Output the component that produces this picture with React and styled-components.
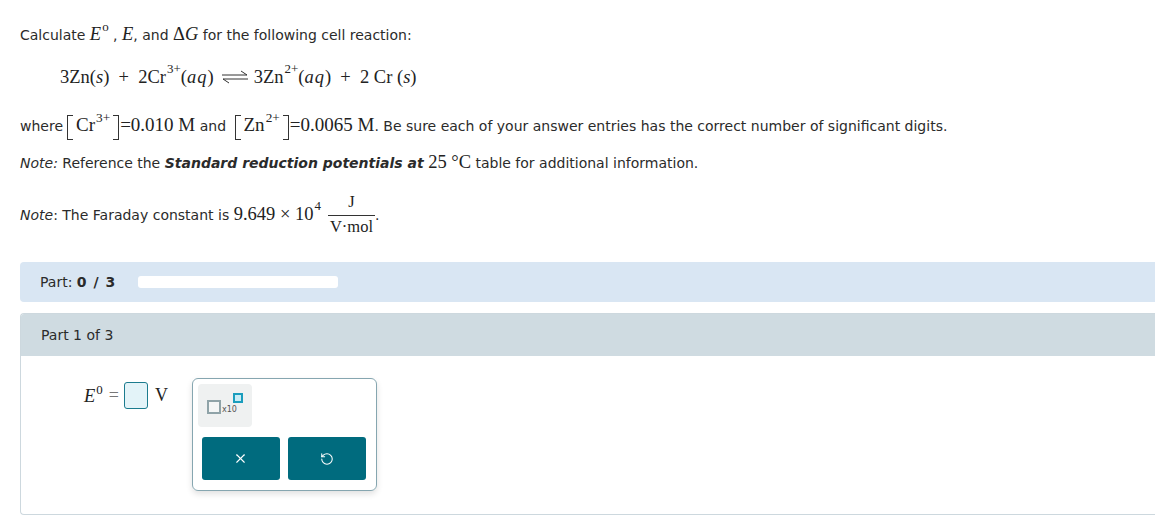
import React from "react";
import styled, { createGlobalStyle } from "styled-components";
import { X, RotateCcw } from "lucide-react";

const Global = createGlobalStyle`
  html, body { margin: 0; padding: 0; background: #fff; overflow: hidden; }
  body { font-family: "DejaVu Sans", Verdana, sans-serif; color: #2b2b2b; }
`;

const Page = styled.div`
  padding: 24px 0 0 20px;
  width: 1160px;
`;

const Para = styled.div`
  font-size: 14px;
  line-height: 20px;
  height: 20px;
  margin-top: ${(p) => p.$mt || 0}px;
  padding-left: ${(p) => p.$indent || 0}px;
  white-space: pre;
`;

const Math = styled.span`
  font-family: "Liberation Serif", "Times New Roman", serif;
  font-size: ${(p) => p.$size || 18.5}px;
  font-style: ${(p) => (p.$italic ? "italic" : "normal")};
  line-height: 20px;
  color: #222;
`;

const Sup = styled.sup`
  font-size: 0.7em;
  vertical-align: baseline;
  position: relative;
  top: ${(p) => -(p.$raise || 0.8)}em;
  margin-left: 1px;
  line-height: 0;
`;

const I = styled.i`
  font-style: italic;
  letter-spacing: ${(p) => p.$ls || 0}px;
`;

const B = styled.b`
  font-weight: bold;
  font-style: italic;
`;

const Bracket = styled.span`
  display: inline-block;
  width: 5px;
  height: 23px;
  margin-top: -6px;
  margin-bottom: -6px;
  vertical-align: middle;
  border: 1px solid #333;
  ${(p) => (p.$side === "left" ? "border-right: none; margin-left: 4px; margin-right: 3px;" : "border-left: none; margin-left: 3px; margin-right: 1px;")}
`;

const Frac = styled.span`
  display: inline-flex;
  flex-direction: column;
  align-items: center;
  vertical-align: middle;
  margin: -14px 0 -14px 7px;
  font-family: "Liberation Serif", "Times New Roman", serif;
  font-size: 16.5px;
  line-height: 18px;
  color: #222;
  position: relative;
  top: -2px;
`;

const FracTop = styled.span`
  padding: 0 2px 4px;
  border-bottom: 1px solid #333;
  align-self: stretch;
  text-align: center;
`;

const FracBottom = styled.span`
  padding: 2px 2px 0;
`;

const ProgressBar = styled.div`
  margin-top: 38px;
  height: 40px;
  background: #d9e6f3;
  border-radius: 4px 0 0 4px;
  display: flex;
  align-items: center;
  padding-left: 20px;
  font-size: 14px;
  white-space: pre;
`;

const Bold = styled.b`
  letter-spacing: 1px;
`;

const Track = styled.div`
  margin-left: 22px;
  width: 200px;
  height: 12px;
  background: #fff;
  border-radius: 3px;
`;

const PartBox = styled.div`
  margin-top: 11px;
  border: 1px solid #cdd8de;
  border-right: none;
  border-radius: 4px 0 0 4px;
  height: 200px;
  overflow: hidden;
`;

const PartHeader = styled.div`
  height: 42px;
  background: #cfdbe1;
  display: flex;
  align-items: center;
  padding-left: 20px;
  font-size: 14px;
`;

const PartBody = styled.div`
  display: flex;
  align-items: flex-start;
  padding: 22px 0 0 63px;
`;

const AnswerRow = styled.div`
  display: flex;
  align-items: center;
  margin-top: 4px;
  font-family: "Liberation Serif", "Times New Roman", serif;
  font-size: 18px;
  color: #222;
  white-space: pre;
`;

const Input = styled.span`
  display: inline-block;
  width: 22px;
  height: 25px;
  border: 1px solid #1b7b8e;
  background: #e3f3f8;
  border-radius: 3px;
  margin: 0 7px 0 5px;
`;

const Eq = styled.span`
  color: #777;
  margin-left: 6px;
`;

const Tool = styled.div`
  margin-left: 24px;
  width: 185px;
  height: 113px;
  border: 1px solid #86a6b0;
  border-radius: 6px;
  box-shadow: 0 3px 6px rgba(0, 0, 0, 0.12);
  padding: 5px;
  box-sizing: border-box;
  display: flex;
  flex-direction: column;
`;

const TemplateBtn = styled.div`
  width: 54px;
  height: 43px;
  background: #eff1f1;
  border-radius: 4px;
  position: relative;
`;

const Box = styled.span`
  position: absolute;
  box-sizing: border-box;
  border: 2px solid ${(p) => p.$c};
  background: ${(p) => p.$bg};
  width: ${(p) => p.$s}px;
  height: ${(p) => p.$s}px;
  left: ${(p) => p.$x}px;
  top: ${(p) => p.$y}px;
`;

const X10 = styled.span`
  position: absolute;
  left: 24px;
  top: 21px;
  font-size: 8px;
  color: #555;
  font-family: "DejaVu Sans", sans-serif;
`;

const BtnRow = styled.div`
  display: flex;
  gap: 8px;
  margin-top: 10px;
  padding: 0 4px;
`;

const ActionBtn = styled.button`
  width: 78px;
  height: 43px;
  border: none;
  border-radius: 3px;
  background: #006b7e;
  color: #fff;
  display: flex;
  align-items: center;
  justify-content: center;
  padding: 0;
`;

const ArrowSvg = styled.svg`
  vertical-align: middle;
  margin: -4px 4px 0 6px;
`;

const Arrow = () => (
  <ArrowSvg width="30" height="14" viewBox="0 0 30 14">
    <path d="M2 5 H27 L21 1" fill="none" stroke="#333" strokeWidth="1" />
    <path d="M28 9 H3 L9 13" fill="none" stroke="#333" strokeWidth="1" />
  </ArrowSvg>
);

export default function App() {
  return (
    <>
      <Global />
      <Page>
        <Para>
          {"Calculate "}
          <Math $italic>E</Math>
          <Math><Sup $raise={0.7}>o</Sup></Math>
          {" , "}
          <Math $italic>E</Math>
          {", and "}
          <Math>Δ</Math>
          <Math $italic>G</Math>
          {" for the following cell reaction:"}
        </Para>
        <Para $mt={23} $indent={40}>
          <Math>3Zn(<I>s</I>)  +  2Cr<Sup>3+</Sup>(<I $ls={1}>aq</I>)</Math>
          <Arrow />
          <Math>3Zn<Sup>2+</Sup>(<I $ls={1}>aq</I>)  +  2 Cr (<I>s</I>)</Math>
        </Para>
        <Para $mt={28}>
          {"where"}
          <Bracket $side="left" />
          <Math $size={19}>Cr<Sup $raise={0.7}>3+</Sup></Math>
          <Bracket $side="right" />
          <Math $size={19}>=0.010 M</Math>
          {" and "}
          <Bracket $side="left" />
          <Math $size={19}>Zn<Sup $raise={0.7}>2+</Sup></Math>
          <Bracket $side="right" />
          <Math $size={19}>=0.0065 M</Math>
          {". Be sure each of your answer entries has the correct number of significant digits."}
        </Para>
        <Para $mt={17}>
          <I>Note:</I>
          {" Reference the "}
          <B>Standard reduction potentials at</B>
          {" "}
          <Math>25 °C</Math>
          {" table for additional information."}
        </Para>
        <Para $mt={32}>
          <I>Note</I>
          {": The Faraday constant is "}
          <Math>9.649 × 10<Sup>4</Sup></Math>
          <Frac>
            <FracTop>J</FracTop>
            <FracBottom>V·mol</FracBottom>
          </Frac>
          {"."}
        </Para>
        <ProgressBar>
          {"Part: "}
          <Bold>{"0 / 3"}</Bold>
          <Track />
        </ProgressBar>
        <PartBox>
          <PartHeader>Part 1 of 3</PartHeader>
          <PartBody>
            <AnswerRow>
              <Math $italic>E</Math>
              <Math><Sup $raise={0.6}>0</Sup></Math>
              <Eq>=</Eq>
              <Input />
              V
            </AnswerRow>
            <Tool>
              <TemplateBtn>
                <Box $c="#8fa3a8" $bg="#f4f6f6" $s={14} $x={9} $y={16} />
                <X10>x10</X10>
                <Box $c="#1a9dbd" $bg="#c9ecf5" $s={10} $x={35} $y={9} />
              </TemplateBtn>
              <BtnRow>
                <ActionBtn><X size={15} strokeWidth={1.8} /></ActionBtn>
                <ActionBtn><RotateCcw size={14} strokeWidth={1.8} /></ActionBtn>
              </BtnRow>
            </Tool>
          </PartBody>
        </PartBox>
      </Page>
    </>
  );
}
